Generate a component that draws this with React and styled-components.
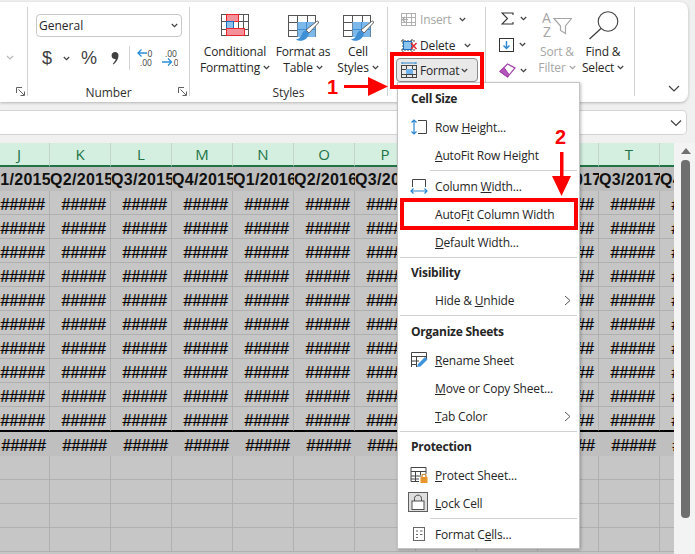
import React from "react";
import styled, { createGlobalStyle } from "styled-components";

const Global = createGlobalStyle`
  html, body { margin: 0; padding: 0; background: #f0f0f0; }
  * { box-sizing: border-box; }
`;

const UI = `"Open Sans", "Noto Sans", sans-serif`;

const Page = styled.div`
  position: relative;
  width: 695px;
  height: 554px;
  overflow: hidden;
  background: #f0f0f0;
  font-family: ${UI};
  font-size: 12px;
  color: #262626;
  display: flex;
  flex-direction: column;
`;

const Ribbon = styled.div`
  flex: none;
  display: flex;
  width: 688px;
  height: 100px;
  margin-top: 2px;
  padding: 5px 0 6px;
  background: #fff;
  border-radius: 0 8px 8px 0;
  box-shadow: 0 1px 3px rgba(0, 0, 0, 0.25);
`;

const Group = styled.div`
  position: relative;
  flex: none;
  width: ${(p) => p.$w}px;
  display: flex;
  flex-direction: column;
  border-right: ${(p) => (p.$last ? "none" : "1px solid #d2d2d2")};
`;

const GroupBody = styled.div`
  flex: 1;
  display: flex;
  min-height: 0;
`;

const GroupFooter = styled.div`
  flex: none;
  height: 18px;
  margin-bottom: -5px;
  display: flex;
  align-items: center;
  justify-content: center;
  font-size: 12px;
  letter-spacing: -0.1px;
  color: #303030;
`;

const Launcher = styled.span`
  position: absolute;
  right: 2px;
  bottom: 0;
  width: 9px;
  height: 9px;
  display: flex;
`;

const NumberBody = styled.div`
  flex: 1;
  padding: 7px 7px 0 8px;
  display: flex;
  flex-direction: column;
  gap: 9px;
`;

const Combo = styled.div`
  flex: none;
  height: 23px;
  padding: 0 3px 0 2px;
  display: flex;
  align-items: center;
  justify-content: space-between;
  border: 1px solid #c8c8c8;
  border-radius: 4px;
  font-size: 12px;
`;

const NumRow = styled.div`
  flex: none;
  display: flex;
  align-items: center;
  height: 24px;
  padding-left: 1px;
`;

const NumGlyph = styled.span`
  flex: none;
  width: ${(p) => p.$w}px;
  margin-right: ${(p) => p.$mr || 0}px;
  font-family: "Liberation Sans", sans-serif;
  font-size: ${(p) => p.$s}px;
  line-height: 24px;
  text-align: center;
  color: #404040;
`;

const Divider = styled.span`
  flex: none;
  width: 1px;
  height: 24px;
  margin: 0 7px;
  background: #d2d2d2;
`;

const DecGap = styled.span`
  flex: none;
  width: 9px;
`;

const BigButton = styled.div`
  flex: none;
  width: ${(p) => p.$w}px;
  margin-left: ${(p) => p.$ml || 0}px;
  display: flex;
  flex-direction: column;
  align-items: center;
  font-size: 12px;
  line-height: 16px;
  text-align: center;
  white-space: nowrap;
  letter-spacing: -0.15px;
  color: ${(p) => (p.$disabled ? "#a6a6a6" : "#262626")};
`;

const IconSlot = styled.div`
  flex: none;
  height: 37px;
  padding-top: ${(p) => p.$top}px;
  display: flex;
  align-items: flex-start;
`;

const Small = styled.div`
  display: flex;
  flex-direction: column;
  padding: 1px 0 0 8px;
  gap: 3px;
`;

const SmallBtn = styled.div`
  display: flex;
  align-items: center;
  width: 82px;
  height: ${(p) => (p.$active ? 24 : 23)}px;
  margin-top: ${(p) => (p.$active ? -2 : 0)}px;
  padding-left: ${(p) => (p.$active ? 3 : 4)}px;
  gap: 2px;
  font-size: 12px;
  white-space: nowrap;
  letter-spacing: -0.15px;
  color: ${(p) => (p.$disabled ? "#a6a6a6" : "#262626")};
  ${(p) =>
    p.$active &&
    `background:#e9e9e9;border:1px solid #8c8c8c;border-radius:4px;`}
`;

const Pushed = styled.span`
  display: flex;
  margin-left: ${(p) => p.$l}px;
`;

const EditCol = styled.div`
  flex: none;
  width: 40px;
  margin-left: 13px;
  display: flex;
  flex-direction: column;
  gap: 3px;
`;

const EditRow = styled.div`
  height: 23px;
  display: flex;
  align-items: center;
  gap: ${(p) => p.$gap || 5}px;
  margin-left: ${(p) => p.$ml || 0}px;
`;

const FormulaBar = styled.div`
  flex: none;
  width: 687px;
  height: 25px;
  margin-top: 8px;
  padding-right: 4px;
  display: flex;
  align-items: center;
  justify-content: flex-end;
  background: #fff;
  border: 1px solid #d4d4d4;
  border-left: none;
  border-radius: 0 5px 5px 0;
`;

const SheetWrap = styled.div`
  flex: 1;
  min-height: 0;
  display: flex;
  margin-top: 8px;
`;

const SheetClip = styled.div`
  flex: none;
  width: 674px;
  overflow: hidden;
  background: #c6c6c6;
`;

const Sheet = styled.div`
  display: grid;
  width: 732px;
  margin-left: -11px;
  grid-template-columns: repeat(12, 61px);
`;

const ColHead = styled.div`
  height: 24px;
  display: flex;
  align-items: center;
  justify-content: center;
  padding-bottom: 1px;
  background: #d4efe0;
  border-right: 1px solid #c3d4ca;
  border-bottom: 2px solid #217346;
  color: #217346;
  font-size: 15px;
`;

const HeadCell = styled.div`
  height: 24px;
  overflow: hidden;
  white-space: nowrap;
  background: #bdbdbd;
  font-family: "Liberation Sans", sans-serif;
  font-weight: 700;
  font-size: 16px;
  letter-spacing: 0.3px;
  line-height: 25px;
  color: #111;
  &:nth-child(13) { text-indent: -1.5px; }
`;

const Cell = styled.div`
  height: ${(p) => (p.$tall ? 25 : 24)}px;
  overflow: hidden;
  text-align: right;
  padding-right: 4px;
  white-space: nowrap;
  background: ${(p) => (p.$tall ? "#bfbfbf" : "#c6c6c6")};
  font-family: "Liberation Sans", sans-serif;
  font-size: 16px;
  line-height: 28px;
  color: #000;
  text-shadow: -0.4px 0 rgba(170, 90, 0, 0.6), 0.4px 0 rgba(0, 90, 170, 0.6);
  border-right: ${(p) => (p.$tall ? "none" : "1px solid #b0b0b0")};
  border-top: ${(p) => (p.$tall ? "1px solid #000" : "none")};
  border-bottom: 1px solid ${(p) => (p.$line ? "#000" : p.$tall ? "#bfbfbf" : "#b0b0b0")};
`;

const EmptyCell = styled(Cell)`
  background: #c6c6c6;
  border-right: 1px solid #b0b0b0;
`;

const Scrollbar = styled.div`
  flex: 1;
  display: flex;
  flex-direction: column;
  align-items: center;
  padding: 5px 0 0 2px;
  background: #f3f3f3;
`;

const ScrollArrow = styled.span`
  width: 0;
  height: 0;
  border-left: 5px solid transparent;
  border-right: 5px solid transparent;
  border-bottom: 6px solid #707070;
`;

const ScrollThumb = styled.div`
  width: 9px;
  height: 358px;
  margin-top: 6px;
  border-radius: 4px;
  background: #6f6f6f;
`;

const Menu = styled.div`
  position: absolute;
  left: 397px;
  top: 82px;
  width: 183px;
  height: 467px;
  padding-top: 1px;
  background: #fff;
  border: 1px solid #c4c4c4;
  box-shadow: 1px 1px 3px rgba(0, 0, 0, 0.25);
  font-size: 12px;
  z-index: 2;
`;

const MenuHead = styled.div`
  height: ${(p) => (p.$tall ? 29 : 28)}px;
  padding: 0 0 ${(p) => (p.$tall ? 1 : 0)}px 13px;
  display: flex;
  align-items: center;
  font-weight: 700;
  letter-spacing: -0.25px;
  color: #262626;
`;

const MenuItem = styled.div`
  position: relative;
  height: 28px;
  padding-left: 37px;
  display: flex;
  align-items: center;
  letter-spacing: -0.17px;
  color: #262626;
  white-space: nowrap;
`;

const MenuIcon = styled.span`
  position: absolute;
  left: ${(p) => (p.$boxed ? 10 : 12)}px;
  top: ${(p) => (p.$boxed ? 3 : 5)}px;
  display: flex;
  align-items: center;
  justify-content: center;
  width: ${(p) => (p.$boxed ? 20 : 18)}px;
  height: ${(p) => (p.$boxed ? 20 : 18)}px;
  ${(p) => p.$boxed && `background:#dedede;border:1px solid #5e5e5e;`}
`;

const MenuCaret = styled.span`
  position: absolute;
  right: 8px;
  top: 9px;
  display: flex;
`;

const MenuSep = styled.div`
  height: 1px;
  margin: ${(p) => p.$t ?? 0}px 2px ${(p) => p.$b ?? 0}px ${(p) => (p.$inset ? 32 : 2)}px;
  background: #d0d0d0;
`;

const Callout = styled.div`
  position: absolute;
  left: ${(p) => p.$x}px;
  top: ${(p) => p.$y}px;
  width: ${(p) => p.$w}px;
  height: ${(p) => p.$h}px;
  border: 4px solid #f00;
  z-index: 3;
`;

const CalloutNum = styled.span`
  position: absolute;
  left: ${(p) => p.$x}px;
  top: ${(p) => p.$y}px;
  font-family: "Liberation Sans", sans-serif;
  font-weight: 700;
  font-size: 20px;
  line-height: 20px;
  color: #f00;
  z-index: 3;
`;

const CalloutArrow = styled.svg`
  position: absolute;
  left: ${(p) => p.$x}px;
  top: ${(p) => p.$y}px;
  z-index: 3;
`;

const InlineChev = styled.span`
  display: inline-flex;
  margin-left: 3px;
  vertical-align: 2px;
`;

/* ---------- icons ---------- */
const Chevron = ({ c = "#404040" }) => (
  <svg width="7" height="5" viewBox="0 0 7 5" style={{ flex: "none" }}>
    <path d="M0.8 1 3.5 3.7 6.2 1" fill="none" stroke={c} strokeWidth="1.2" />
  </svg>
);
const DlgLaunch = () => (
  <svg width="9" height="9" viewBox="0 0 9 9">
    <path d="M0.5 6V0.5H6M2.5 2.5 8 8M8.5 4.5V8.5H4.5" fill="none" stroke="#606060" strokeWidth="1" />
  </svg>
);

const Lines = ({ x, y, w, h, cols, rows, c = "#404040" }) => (
  <g fill="none" stroke={c} strokeWidth="1">
    <rect x={x + 0.5} y={y + 0.5} width={w - 1} height={h - 1} />
    {Array.from({ length: cols - 1 }, (_, i) => {
      const X = Math.round(x + (w * (i + 1)) / cols) + 0.5;
      return <path key={i} d={`M${X} ${y}V${y + h}`} />;
    })}
    {Array.from({ length: rows - 1 }, (_, i) => {
      const Y = Math.round(y + (h * (i + 1)) / rows) + 0.5;
      return <path key={i} d={`M${x} ${Y}H${x + w}`} />;
    })}
  </g>
);

const CondIcon = () => (
  <svg width="28" height="22" viewBox="0 0 28 22">
    <Lines x={0} y={0} w={28} h={22} cols={5} rows={3} c="#555" />
    <rect x="5.5" y="0.5" width="12" height="7" fill="#f4919a" stroke="#e8262c" />
    <rect x="5.5" y="7.5" width="7" height="7" fill="#8cbfea" stroke="#1f6fc0" />
    <rect x="5.5" y="14.5" width="18" height="7" fill="#f4919a" stroke="#e8262c" />
  </svg>
);

const TableIcon = () => (
  <svg width="31" height="28" viewBox="0 0 31 28">
    <Lines x={0} y={0} w={28} h={22} cols={3} rows={3} c="#555" />
    <rect x="9.5" y="7" width="18" height="15" fill="#7db8ea" />
    <path d="M18.5 7V22M9.5 14.5H28" stroke="#3f8fd4" strokeWidth="1" />
    <path d="M28.5 6.5C30 5.5 31 6.5 30.3 8L21 18 18 15Z" fill="#fff" stroke="#666" strokeWidth="1" />
    <path d="M17.5 15.5C14 16 14 20 12.5 22C11 23.5 9.5 24 8 24.5C12 27 19.5 26 21 18.5Z" fill="#3f8fd4" />
  </svg>
);

const SmallGrid = ({ children }) => (
  <svg width="18" height="16" viewBox="0 0 18 16" style={{ flex: "none" }}>{children}</svg>
);

const InsertIcon = () => (
  <SmallGrid>
    <Lines x={1} y={1} w={15} h={13} cols={3} rows={3} c="#b0b0b0" />
    <path d="M8 7.5H3M5 5 2.5 7.5 5 10" fill="none" stroke="#a8a8a8" strokeWidth="1.2" />
  </SmallGrid>
);
const DeleteIcon = () => (
  <SmallGrid>
    <path d="M1 3H15M1 12H15M3 1V15M12 1V15" stroke="#444" strokeDasharray="2 1" />
    <rect x="3.5" y="3.5" width="8" height="8" fill="#8cc4f0" stroke="#1f6fc0" />
    <path d="M11 5 16.5 11M16.5 5 11 11" stroke="#e0282e" strokeWidth="1.5" />
  </SmallGrid>
);
const FormatIcon = () => (
  <SmallGrid>
    <Lines x={1} y={3} w={16} h={13} cols={3} rows={3} c="#444" />
    <rect x="6" y="7" width="7" height="5" fill="#6fb1e8" />
    <path d="M2 1H16" stroke="#2a86d0" strokeWidth="1" />
    <path d="M2 0V2M16 0V2" stroke="#2a86d0" />
  </SmallGrid>
);
const SumIcon = () => (
  <svg width="13" height="13" viewBox="0 0 13 13" style={{ flex: "none" }}>
    <path d="M12 3V1H1L6.5 6.5 1 12H12V10" fill="none" stroke="#333" strokeWidth="1.1" />
  </svg>
);
const FillIcon = () => (
  <svg width="15" height="14" viewBox="0 0 15 14" style={{ flex: "none" }}>
    <rect x="0.5" y="0.5" width="14" height="13" fill="#fff" stroke="#333" />
    <path d="M7.5 3V10M4.5 7.5 7.5 10.5 10.5 7.5" fill="none" stroke="#2a86d0" strokeWidth="1.4" />
  </svg>
);
const ClearIcon = () => (
  <svg width="17" height="15" viewBox="0 0 17 15" style={{ flex: "none" }}>
    <path d="M1 8.5 8.5 1 16 5 8.5 14Z" fill="#fff" stroke="#a040a8" strokeWidth="1.2" />
    <path d="M1 8.5 5 4.5 10 11.5 8.5 14Z" fill="#b455bc" stroke="#a040a8" />
  </svg>
);
const SortIcon = () => (
  <svg width="30" height="26" viewBox="0 0 30 26">
    <text x="0" y="11" fontSize="14" fontFamily="Open Sans" fill="#a6a6a6">A</text>
    <text x="1" y="25" fontSize="14" fontFamily="Open Sans" fill="#a6a6a6">Z</text>
    <path d="M12 6.5H29.5L23.5 14V21.5L18.5 18.5V14Z" fill="#fff" stroke="#a6a6a6" strokeWidth="1.2" />
  </svg>
);
const FindIcon = () => (
  <svg width="31" height="30" viewBox="0 0 31 30">
    <circle cx="20" cy="11.5" r="9.8" fill="none" stroke="#404040" strokeWidth="1.1" />
    <path d="M13 18.6 1.5 29" stroke="#404040" strokeWidth="1.3" />
  </svg>
);
const PctComma = () => (
  <svg width="14" height="16" viewBox="0 0 14 16" style={{ flex: "none" }}>
    <path d="M7 2C9.2 2 10.5 3.4 10.5 5.6C10.5 9 8.5 12 5.5 14.5L4.8 13.8C6.5 12 7.4 10.6 7.7 9C5.2 9.4 3.6 8 3.6 5.6C3.6 3.4 5 2 7 2Z" fill="#404040" />
  </svg>
);
const DecIcon = ({ more }) => (
  <svg width="16" height="20" viewBox="0 0 16 20" style={{ flex: "none" }}>
    <text x={more ? 3 : 10.5} y="8.5" fontSize="8.5" fontFamily="Open Sans" fill="#404040">{more ? ".00" : "0"}</text>
    <text x={more ? 9.5 : 3} y="18" fontSize="8.5" fontFamily="Open Sans" fill="#404040">{more ? ".0" : ".00"}</text>
    {more ? (
      <path d="M0 14H9.5M6 10.5 9.5 14 6 17.5" fill="none" stroke="#2a8fd8" strokeWidth="1.3" />
    ) : (
      <path d="M10 5H1M4.5 1.5 1 5 4.5 8.5" fill="none" stroke="#2a8fd8" strokeWidth="1.3" />
    )}
  </svg>
);

const RowHIcon = () => (
  <svg width="18" height="16" viewBox="0 0 18 16">
    <path d="M8 1.5H16.5V14.5H8" fill="none" stroke="#444" />
    <path d="M4 1V15M1.5 3.5 4 1 6.5 3.5M1.5 12.5 4 15 6.5 12.5" fill="none" stroke="#2a86d0" strokeWidth="1.2" />
  </svg>
);
const ColWIcon = () => (
  <svg width="18" height="16" viewBox="0 0 18 16">
    <path d="M2.5 9V1.5H15.5V9" fill="none" stroke="#444" />
    <path d="M1 13H17M3.5 10.5 1 13 3.5 15.5M14.5 10.5 17 13 14.5 15.5" fill="none" stroke="#2a86d0" strokeWidth="1.2" />
  </svg>
);
const RenameIcon = () => (
  <svg width="18" height="16" viewBox="0 0 18 16">
    <path d="M1.5 15V0.5H16.5V7M1 4.5H16M1 9H9M1 12.5H6M6.5 5V15" fill="none" stroke="#444" />
    <path d="M7 15 8 12 15 5 17.5 7.5 10.5 14.5Z" fill="#3f94dc" />
  </svg>
);
const ProtectIcon = () => (
  <svg width="18" height="16" viewBox="0 0 18 16">
    <path d="M9 14.5H1V0.5H16V7M1 4.5H16M1 9H11M1 12H9M5.5 5V14.5M10.5 5V8" fill="none" stroke="#444" />
    <rect x="10.5" y="10" width="7" height="6" fill="#e8952c" />
    <path d="M12 10V8.6C12 6.8 16 6.8 16 8.6V10" fill="none" stroke="#c87a18" strokeWidth="1.2" />
  </svg>
);
const LockIcon = () => (
  <svg width="14" height="16" viewBox="0 0 14 16">
    <rect x="1" y="7" width="12" height="8.5" fill="#fff" stroke="#505050" />
    <path d="M3.5 7V4.5C3.5 0 10.5 0 10.5 4.5V7" fill="none" stroke="#505050" />
  </svg>
);
const CellsIcon = () => (
  <svg width="12" height="14" viewBox="0 0 12 14">
    <rect x="0.5" y="0.5" width="11" height="13" fill="#fff" stroke="#666" />
    <path d="M3 4H5M3 7.5H5M3 10.5H5M7 4H9.5M7 7.5H9.5" stroke="#666" />
  </svg>
);
const Caret = () => (
  <svg width="7" height="11" viewBox="0 0 7 11">
    <path d="M1 1 6 5.5 1 10" fill="none" stroke="#555" strokeWidth="1" />
  </svg>
);

const COLS = "JKLMNOPQRSTU".split("");
const QS = COLS.map((_, i) => `Q${(i % 4) + 1}/${2015 + Math.floor(i / 4)}`);
const HASH = "#####";

export default function App() {
  return (
    <Page>
      <Global />
      <Ribbon>
        <Group $w={28}>
          <GroupBody>
            <svg width="24" height="60" viewBox="0 0 24 60" style={{ flex: "none" }}>
              <path d="M7 49 10 52 13 49" fill="none" stroke="#b8b8b8" strokeWidth="1.2" />
            </svg>
          </GroupBody>
          <GroupFooter />
          <Launcher><DlgLaunch /></Launcher>
        </Group>

        <Group $w={162}>
          <NumberBody>
            <Combo>General<Chevron /></Combo>
            <NumRow>
              <NumGlyph $w={20} $s={18} $mr={6}>$</NumGlyph>
              <Chevron />
              <NumGlyph $w={38} $s={18}>%</NumGlyph>
              <PctComma />
              <Divider />
              <DecIcon />
              <DecGap />
              <DecIcon more />
            </NumRow>
          </NumberBody>
          <GroupFooter>Number</GroupFooter>
          <Launcher><DlgLaunch /></Launcher>
        </Group>

        <Group $w={198}>
          <GroupBody>
            <BigButton $w={68} $ml={11}>
              <IconSlot $top={7}><CondIcon /></IconSlot>
              <span>Conditional</span>
              <span>Formatting<InlineChev><Chevron /></InlineChev></span>
            </BigButton>
            <BigButton $w={60} $ml={4}>
              <IconSlot $top={8}><TableIcon /></IconSlot>
              <span>Format as</span>
              <span>Table<InlineChev><Chevron /></InlineChev></span>
            </BigButton>
            <BigButton $w={46} $ml={2}>
              <IconSlot $top={8}><TableIcon /></IconSlot>
              <span>Cell</span>
              <span>Styles<InlineChev><Chevron /></InlineChev></span>
            </BigButton>
          </GroupBody>
          <GroupFooter>Styles</GroupFooter>
        </Group>

        <Group $w={98}>
          <Small>
            <SmallBtn $disabled>
              <InsertIcon />Insert
              <Pushed $l={6}><Chevron /></Pushed>
            </SmallBtn>
            <SmallBtn>
              <DeleteIcon />Delete
              <Pushed $l={7}><Chevron /></Pushed>
            </SmallBtn>
            <SmallBtn $active>
              <FormatIcon />Format<Chevron />
            </SmallBtn>
          </Small>
        </Group>

        <Group $w={149}>
          <GroupBody>
            <EditCol>
              <EditRow $ml={2} $gap={6}><SumIcon /><Chevron /></EditRow>
              <EditRow $gap={5}><FillIcon /><Chevron /></EditRow>
              <EditRow $gap={4}><ClearIcon /><Chevron /></EditRow>
            </EditCol>
            <BigButton $w={36} $disabled>
              <IconSlot $top={5}><SortIcon /></IconSlot>
              <span>Sort &amp;</span>
              <span>Filter<InlineChev><Chevron c="#a6a6a6" /></InlineChev></span>
            </BigButton>
            <BigButton $w={46} $ml={5}>
              <IconSlot $top={3}><FindIcon /></IconSlot>
              <span>Find &amp;</span>
              <span>Select<InlineChev><Chevron /></InlineChev></span>
            </BigButton>
          </GroupBody>
        </Group>

        <Group $w={53} $last>
          <GroupBody />
          <svg width="52" height="14" viewBox="0 0 52 14" style={{ flex: "none" }}>
            <path d="M34 4 39 9 44 4" fill="none" stroke="#404040" strokeWidth="1.2" />
          </svg>
        </Group>
      </Ribbon>

      <FormulaBar>
        <svg width="12" height="8" viewBox="0 0 12 8">
          <path d="M1 1.5 6 6.5 11 1.5" fill="none" stroke="#404040" strokeWidth="1.2" />
        </svg>
      </FormulaBar>

      <SheetWrap>
        <SheetClip>
          <Sheet>
            {COLS.map((c) => <ColHead key={c}>{c}</ColHead>)}
            {QS.map((q) => <HeadCell key={q}>{q}</HeadCell>)}
            {Array.from({ length: 10 }, (_, r) =>
              COLS.map((c) => <Cell key={c + r} $line={r === 9}>{HASH}</Cell>)
            )}
            {COLS.map((c) => <Cell key={c + "last"} $tall>{HASH}</Cell>)}
            {Array.from({ length: 4 }, (_, r) =>
              COLS.map((c) => <EmptyCell key={c + "e" + r} />)
            )}
          </Sheet>
        </SheetClip>
        <Scrollbar>
          <ScrollArrow />
          <ScrollThumb />
        </Scrollbar>
      </SheetWrap>

      <Menu>
        <MenuHead $tall>Cell Size</MenuHead>
        <MenuItem><MenuIcon><RowHIcon /></MenuIcon>Row&nbsp;<u>H</u>eight...</MenuItem>
        <MenuItem><u>A</u>utoFit Row Height</MenuItem>
        <MenuSep $inset $t={1} $b={1} />
        <MenuItem><MenuIcon><ColWIcon /></MenuIcon>Column&nbsp;<u>W</u>idth...</MenuItem>
        <MenuItem>AutoF<u>i</u>t Column Width</MenuItem>
        <MenuItem><u>D</u>efault Width...</MenuItem>
        <MenuSep $t={1} />
        <MenuHead>Visibility</MenuHead>
        <MenuItem>Hide &amp;&nbsp;<u>U</u>nhide<MenuCaret><Caret /></MenuCaret></MenuItem>
        <MenuSep $t={1} $b={1} />
        <MenuHead $tall>Organize Sheets</MenuHead>
        <MenuItem><MenuIcon><RenameIcon /></MenuIcon><u>R</u>ename Sheet</MenuItem>
        <MenuItem><u>M</u>ove or Copy Sheet...</MenuItem>
        <MenuItem><u>T</u>ab Color<MenuCaret><Caret /></MenuCaret></MenuItem>
        <MenuSep $t={1} />
        <MenuHead $tall>Protection</MenuHead>
        <MenuItem><MenuIcon><ProtectIcon /></MenuIcon><u>P</u>rotect Sheet...</MenuItem>
        <MenuItem><MenuIcon $boxed><LockIcon /></MenuIcon><u>L</u>ock Cell</MenuItem>
        <MenuSep $inset $t={1} $b={1} />
        <MenuItem><MenuIcon><CellsIcon /></MenuIcon>Format C<u>e</u>lls...</MenuItem>
      </Menu>

      <Callout $x={390} $y={52} $w={94} $h={37} />
      <Callout $x={400} $y={198} $w={178} $h={32} />
      <CalloutNum $x={327} $y={77}>1</CalloutNum>
      <CalloutNum $x={555} $y={127}>2</CalloutNum>
      <CalloutArrow $x={344} $y={77} width="44" height="20" viewBox="0 0 44 20">
        <path d="M0 8H24V0L44 9.5 24 19V11H0Z" fill="#f00" />
      </CalloutArrow>
      <CalloutArrow $x={552} $y={152} width="19" height="44" viewBox="0 0 19 44">
        <path d="M8 0H11.5V24H19L9.5 44 0 24H8Z" fill="#f00" />
      </CalloutArrow>
    </Page>
  );
}
